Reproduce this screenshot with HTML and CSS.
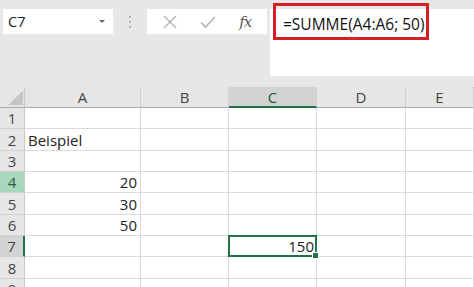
FILE: index.html
```html
<!DOCTYPE html>
<html lang="de">
<head>
    <meta charset="UTF-8">
    <title>SUMME Beispiel</title>
    <link rel="stylesheet" href="styles.css">
</head>
<body>
    <div class="toolbar">
        <div class="name-box">
            <span>C7</span>
            <span class="caret"></span>
        </div>
        <div class="grip"><i></i><i></i><i></i></div>
        <div class="fx-buttons">
            <svg class="icon" width="14" height="14" viewBox="0 0 14 14">
                <path d="M1 1 L13 13 M13 1 L1 13" stroke="#b3b3b3" stroke-width="1.4" fill="none"/>
            </svg>
            <svg class="icon" width="16" height="14" viewBox="0 0 16 14">
                <path d="M1 7.5 L5.5 12 L15 2" stroke="#b3b3b3" stroke-width="1.6" fill="none"/>
            </svg>
            <span class="fx">fx</span>
        </div>
        <div class="formula">=SUMME(A4:A6; 50)</div>
        <div class="highlight"></div>
    </div>

    <div class="sheet">
        <div class="corner"></div>
        <div class="col-head">A</div>
        <div class="col-head">B</div>
        <div class="col-head active">C</div>
        <div class="col-head">D</div>
        <div class="col-head">E</div>

        <div class="row-head">1</div>
        <div class="cell"></div><div class="cell"></div><div class="cell"></div><div class="cell"></div><div class="cell"></div>

        <div class="row-head">2</div>
        <div class="cell">Beispiel</div><div class="cell"></div><div class="cell"></div><div class="cell"></div><div class="cell"></div>

        <div class="row-head">3</div>
        <div class="cell"></div><div class="cell"></div><div class="cell"></div><div class="cell"></div><div class="cell"></div>

        <div class="row-head hint">4</div>
        <div class="cell num">20</div><div class="cell"></div><div class="cell"></div><div class="cell"></div><div class="cell"></div>

        <div class="row-head">5</div>
        <div class="cell num">30</div><div class="cell"></div><div class="cell"></div><div class="cell"></div><div class="cell"></div>

        <div class="row-head">6</div>
        <div class="cell num">50</div><div class="cell"></div><div class="cell"></div><div class="cell"></div><div class="cell"></div>

        <div class="row-head active">7</div>
        <div class="cell"></div><div class="cell"></div><div class="cell num selected">150<span class="handle"></span></div><div class="cell"></div><div class="cell"></div>

        <div class="row-head">8</div>
        <div class="cell"></div><div class="cell"></div><div class="cell"></div><div class="cell"></div><div class="cell"></div>

        <div class="row-head">9</div>
        <div class="cell"></div><div class="cell"></div><div class="cell"></div><div class="cell"></div><div class="cell"></div>
    </div>
</body>
</html>
```

FILE: styles.css
```css
body {
    margin: 0;
    background: #e7e7e7;
    font-family: "Open Sans", "Noto Sans", Arial, sans-serif;
    color: #222;
    width: 474px;
    height: 287px;
    overflow: hidden;
}

.toolbar {
    position: relative;
    display: flex;
    align-items: flex-start;
    height: 87px;
    padding: 9px 0 0 3px;
    box-sizing: border-box;
}

.name-box {
    width: 110px;
    height: 25px;
    background: #fff;
    display: flex;
    align-items: center;
    justify-content: space-between;
    padding: 0 8px 0 5px;
    box-sizing: border-box;
    font-size: 14.5px;
}

.caret {
    width: 0;
    height: 0;
    border-left: 3px solid transparent;
    border-right: 3px solid transparent;
    border-top: 3px solid #666;
}

.grip {
    width: 34px;
    height: 25px;
    display: flex;
    flex-direction: column;
    align-items: center;
    justify-content: center;
    gap: 3px;
}

.grip i {
    width: 2px;
    height: 2px;
    background: #b0b0b0;
}

.fx-buttons {
    width: 120px;
    height: 25px;
    background: #fff;
    display: flex;
    align-items: center;
    justify-content: space-around;
    padding: 0 4px 0 4px;
    box-sizing: border-box;
}

.fx {
    font-family: "DejaVu Serif", "Liberation Serif", serif;
    font-style: italic;
    font-size: 15px;
    color: #555;
    letter-spacing: -1px;
}

.formula {
    flex: 1;
    margin-left: 3px;
    height: 67px;
    background: #fff;
    font-size: 15.5px;
    padding: 4px 0 0 13px;
    box-sizing: border-box;
    color: #111;
}

.highlight {
    position: absolute;
    left: 273px;
    top: 3px;
    width: 156px;
    height: 37px;
    border: 3px solid #d51f23;
    box-sizing: border-box;
}

.sheet {
    display: grid;
    grid-template-columns: 25px 116px 88px 88px 89px 1fr;
    grid-template-rows: 21px repeat(9, 21.35px);
    background: #fff;
    font-size: 15px;
}

.corner {
    background: #e6e6e6 linear-gradient(135deg, transparent 50%, #c4c4c4 50%) no-repeat;
    background-size: 15px 15px;
    background-position: 8px 3px;
    border-right: 1px solid #c8c8c8;
    border-bottom: 1px solid #ababab;
}

.col-head {
    background: #e6e6e6;
    color: #444;
    display: flex;
    align-items: center;
    justify-content: center;
    border-right: 1px solid #d0d0d0;
    border-bottom: 1px solid #ababab;
}

.col-head.active {
    background: #d3d3d3;
    color: #1e5b3a;
    border-bottom: 2px solid #217346;
}

.row-head {
    background: #e6e6e6;
    color: #444;
    display: flex;
    align-items: center;
    justify-content: center;
    border-right: 1px solid #c8c8c8;
    border-bottom: 1px solid #d2d2d2;
}

.row-head.hint {
    background: #a8d8bc;
    color: #2b5a3f;
}

.row-head.active {
    background: #d3d3d3;
    border-right: 2px solid #217346;
}

.cell {
    border-right: 1px solid #dadada;
    border-bottom: 1px solid #dadada;
    display: flex;
    align-items: center;
    padding: 0 3px;
    box-sizing: border-box;
    white-space: nowrap;
}

.cell.num {
    justify-content: flex-end;
}

.cell.selected {
    position: relative;
    border: 2px solid #217346;
    margin: -1px 0 0 -1px;
    padding-right: 1px;
}

.handle {
    position: absolute;
    right: -4px;
    bottom: -4px;
    width: 5px;
    height: 5px;
    background: #217346;
    border: 1px solid #fff;
}
```
